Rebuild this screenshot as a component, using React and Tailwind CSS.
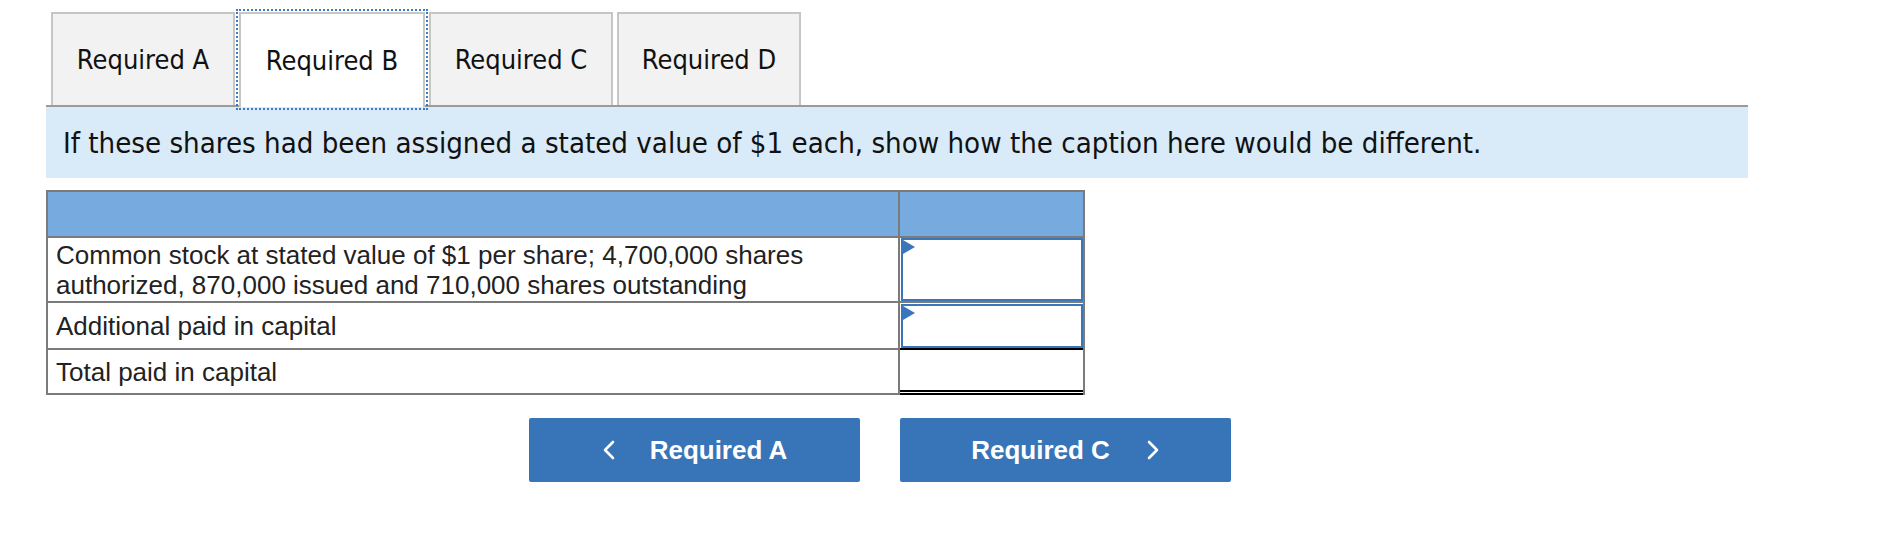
import React from 'react';

const tabs = ['Required A', 'Required B', 'Required C', 'Required D'];

const Marker = () => (
    <svg className="absolute left-0 top-0" width="12" height="14" viewBox="0 0 12 14">
        <polygon points="0,0 12,7 0,14" fill="#3a76bb" />
    </svg>
);

const Chevron = ({ dir }) => (
    <svg width="14" height="20" viewBox="0 0 14 20" fill="none">
        <path
            d={dir === 'left' ? 'M11 2 L3 10 L11 18' : 'M3 2 L11 10 L3 18'}
            stroke="white"
            strokeWidth="2.6"
            strokeLinecap="round"
            strokeLinejoin="round"
        />
    </svg>
);

export default function App() {
    return (
        <div className="w-[1902px] h-[540px] bg-white overflow-hidden">
            <div className="ml-[46px] pt-[12px] w-[1702px]">
                {/* Tabs */}
                <div className="flex gap-[4px] pl-[5px] h-[93px] border-b-2 border-[#9b9b9b] box-content">
                    {tabs.map((t, i) => (
                        <div
                            key={t}
                            className={
                                i === 1
                                    ? 'w-[186px] h-[95px] -mb-[2px] pt-[2px] flex items-center justify-center bg-white border-2 border-b-0 border-[#c6c6c6] outline-2 outline-dotted outline-[#3c7cc4] outline-offset-[1px] text-[#111] text-[27px] [font-family:"DejaVu_Sans_Condensed","DejaVu_Sans",sans-serif] [font-stretch:condensed]'
                                    : 'w-[184px] h-[93px] pt-[2px] flex items-center justify-center bg-[#f2f2f2] border-2 border-b-0 border-[#c6c6c6] text-[#111] text-[27px] [font-family:"DejaVu_Sans_Condensed","DejaVu_Sans",sans-serif] [font-stretch:condensed]'
                            }
                        >
                            {t}
                        </div>
                    ))}
                </div>

                {/* Prompt */}
                <div className="h-[71px] bg-[#d9eaf8] flex items-center pt-[3px] pl-[17px] text-[#111] text-[29.15px] [font-family:'DejaVu_Sans_Condensed','DejaVu_Sans',sans-serif] [font-stretch:condensed]">
                    If these shares had been assigned a stated value of $1 each, show how the caption here would be different.
                </div>

                {/* Table */}
                <div className="mt-[12px] w-[1039px] border-2 border-b-0 border-[#7b7b7b] text-[26px] leading-[30px] text-[#222] [font-family:'Liberation_Sans',Arial,sans-serif]">
                    <div className="flex h-[46px] bg-[#77abe0] border-b-2 border-[#7b7b7b]">
                        <div className="w-[852px] border-r-2 border-[#7b7b7b]" />
                        <div className="flex-1" />
                    </div>
                    <div className="flex h-[65px]">
                        <div className="w-[852px] border-r-2 border-b-2 border-[#7b7b7b] pl-[8px] flex flex-col justify-center">
                            <div>Common stock at stated value of $1 per share; 4,700,000 shares</div>
                            <div>authorized, 870,000 issued and 710,000 shares outstanding</div>
                        </div>
                        <div className="flex-1 pl-[1px] border-b-2 border-[#7b7b7b]">
                            <div className="relative h-full border-2 border-[#3a76bb] bg-white">
                                <Marker />
                            </div>
                        </div>
                    </div>
                    <div className="flex h-[47px]">
                        <div className="w-[852px] border-r-2 border-b-2 border-[#7b7b7b] pl-[8px] flex items-center">
                            Additional paid in capital
                        </div>
                        <div className="flex-1 pl-[1px] pt-[1px] border-b-2 border-black">
                            <div className="relative h-full border-2 border-[#3a76bb] bg-white">
                                <Marker />
                            </div>
                        </div>
                    </div>
                    <div className="flex h-[45px]">
                        <div className="w-[852px] border-r-2 border-b-2 border-[#7b7b7b] pl-[8px] flex items-center">
                            Total paid in capital
                        </div>
                        <div className="flex-1 border-b-[5px] border-double border-black" />
                    </div>
                </div>

                {/* Navigation buttons */}
                <div className="mt-[23px] ml-[483px] flex gap-[40px] [font-family:'Liberation_Sans',Arial,sans-serif]">
                    <button className="w-[331px] h-[64px] bg-[#3874b8] rounded-[2px] flex items-center justify-center gap-[34px] text-white text-[26px] font-bold">
                        <Chevron dir="left" />
                        <span>Required A</span>
                    </button>
                    <button className="w-[331px] h-[64px] bg-[#3874b8] rounded-[2px] flex items-center justify-center gap-[36px] text-white text-[26px] font-bold">
                        <span>Required C</span>
                        <Chevron dir="right" />
                    </button>
                </div>
            </div>
        </div>
    );
}
